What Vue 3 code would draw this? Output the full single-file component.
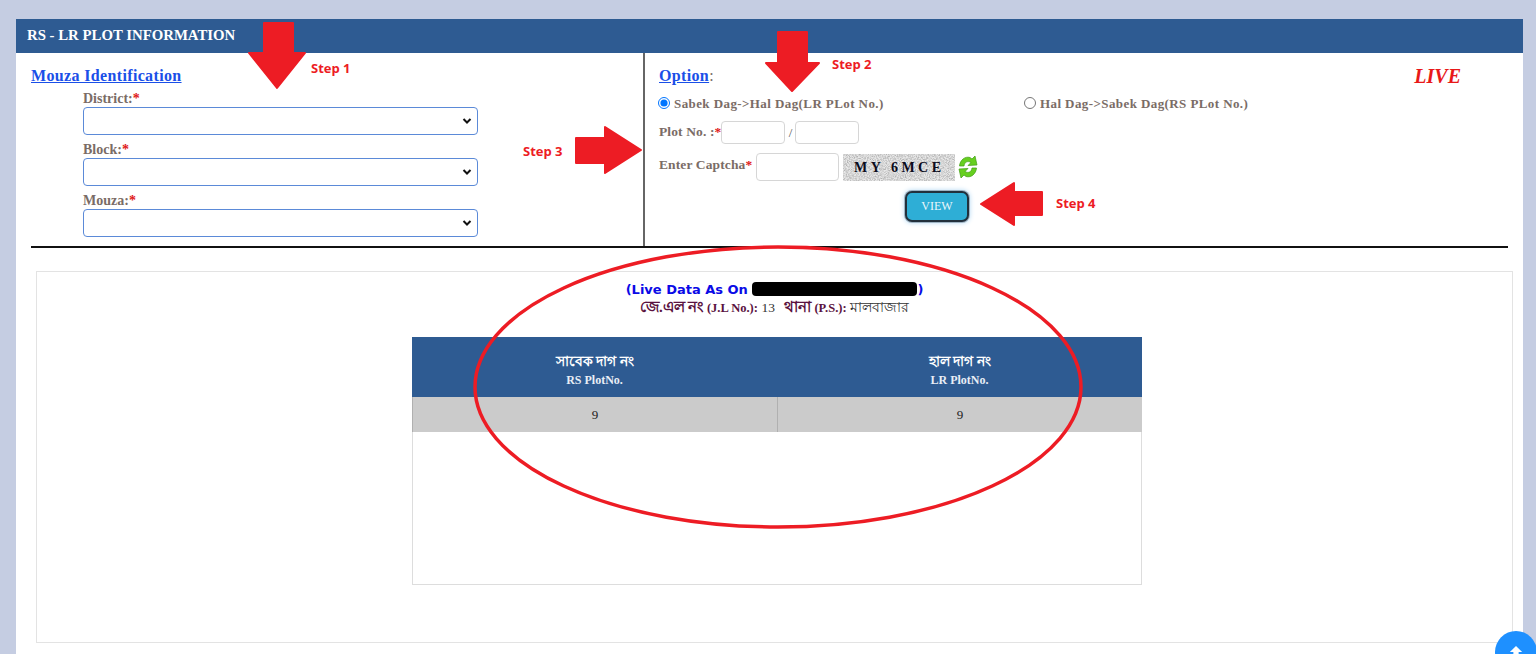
<script setup>
const fields = ['District', 'Block', 'Mouza']
const arrows = [
  '264,23 293,23 293,53 305,53 277,88 249,53 264,53',
  '778,32 807,32 807,63 819,63 792,91 766,63 778,63',
  '576,138 605,138 605,127 641,150 605,173 605,163 576,163',
  '981,204 1014,183 1014,192 1042,192 1042,215 1014,215 1014,225'
]
</script>

<template>
  <div class="page">
    <main class="panel">
      <header class="title">RS - LR PLOT INFORMATION</header>

      <section class="top">
        <div class="left">
          <h2 class="heading"><u>Mouza Identification</u></h2>
          <div class="fields">
            <label v-for="f in fields" :key="f" class="field">
              <span class="lbl">{{ f }}:<b class="req">*</b></span>
              <select class="sel"><option></option></select>
            </label>
          </div>
        </div>

        <div class="right">
          <div class="opt-head">
            <h2 class="heading"><u>Option</u><span class="colon">:</span></h2>
            <em class="live">LIVE</em>
          </div>
          <div class="radios">
            <label class="radio first"><input type="radio" name="m" checked />Sabek Dag-&gt;Hal Dag(LR PLot No.)</label>
            <label class="radio"><input type="radio" name="m" />Hal Dag-&gt;Sabek Dag(RS PLot No.)</label>
          </div>
          <div class="plot">
            <span class="lbl2 up2">Plot No. :<b class="req">*</b></span>
            <input class="inp short" />
            <span class="slash">/</span>
            <input class="inp short" />
          </div>
          <div class="captcha">
            <span class="lbl2 up4">Enter Captcha<b class="req">*</b></span>
            <input class="inp code" />
            <div class="capimg">
              <svg class="noise" width="112" height="27" aria-hidden="true">
                <filter id="grain">
                  <feTurbulence type="fractalNoise" baseFrequency="0.9" numOctaves="2" seed="4" />
                  <feColorMatrix values="0 0 0 0 0.45  0 0 0 0 0.45  0 0 0 0 0.45  1.6 1.6 0 0 -1.25" />
                </filter>
                <rect width="112" height="27" fill="#e8e8e8" />
                <rect width="112" height="27" filter="url(#grain)" />
              </svg>
              <span class="captext">MY 6MCE</span>
            </div>
            <svg class="refresh" width="22" height="24" viewBox="0 0 22 24" aria-hidden="true">
              <path d="M2.500 11 C3 5 8 1 13 2.500 L15 4 L18 1 L20 10 L11 10.500 L14 7.500 C10.500 5.500 7.500 7 7 11 Z" fill="#66cf1f" stroke="#3f9c12" stroke-width=".7" />
              <path d="M19.500 13 C19 19 14 23 9 21.500 L7 20 L4 23 L2 14 L11 13.500 L8 16.500 C11.500 18.500 14.500 17 15 13 Z" fill="#66cf1f" stroke="#3f9c12" stroke-width=".7" />
            </svg>
          </div>
          <div class="actions"><button class="view">VIEW</button></div>
        </div>
      </section>

      <section class="result">
        <p class="asof">(Live Data As On <span class="redact"></span>)</p>
        <p class="meta">
          <b>জে.এল নং</b> <span class="en">(J.L No.):</span> <span class="val">13</span>
          <b class="gap">থানা</b> <span class="en">(P.S.):</span> <span class="val">মালবাজার</span>
        </p>
        <div class="tablebox">
          <div class="thead">
            <div class="th"><strong>সাবেক দাগ নং</strong><small>RS PlotNo.</small></div>
            <div class="th"><strong>হাল দাগ নং</strong><small>LR PlotNo.</small></div>
          </div>
          <div class="trow">
            <div class="td">9</div>
            <div class="td">9</div>
          </div>
        </div>
      </section>
    </main>

    <svg class="marks" width="1536" height="654" viewBox="0 0 1536 654" aria-hidden="true">
      <polygon v-for="p in arrows" :key="p" :points="p" fill="#ed1c24" stroke="#ed1c24" stroke-width="2" stroke-linejoin="round" />
      <ellipse cx="778" cy="387" rx="303" ry="140" fill="none" stroke="#ed1c24" stroke-width="3.500" />
    </svg>
    <span class="step s1">Step 1</span>
    <span class="step s2">Step 2</span>
    <span class="step s3">Step 3</span>
    <span class="step s4">Step 4</span>
    <button class="totop" aria-label="Back to top">
      <svg width="14" height="14" viewBox="0 0 16 16"><path d="M8 1 L15 8 H11 V15 H5 V8 H1 Z" fill="#fff" /></svg>
    </button>
  </div>
</template>

<style>
html, body { margin: 0; overflow: hidden; background: #c5cde2; }
</style>

<style scoped>
.page {
  position: relative;
  width: 1536px;
  height: 654px;
  overflow: hidden;
  box-sizing: border-box;
  padding: 19px 13px 0 16px;
  background: #c5cde2;
  font-family: "Liberation Serif", "Noto Sans", serif;
}
.panel { background: #fff; height: 635px; }
.title {
  height: 34px;
  line-height: 33px;
  padding-left: 11px;
  background: #2e5b92;
  color: #fff;
  font-size: 14.800px;
  font-weight: 700;
}
.top {
  display: flex;
  height: 193px;
  margin: 0 15px;
  border-bottom: 2px solid #111;
}
.left { width: 612px; border-right: 2px solid #666; }
.heading {
  margin: 0;
  font-size: 16px;
  line-height: 20px;
  font-weight: 700;
  color: #1a4fe8;
  letter-spacing: .35px;
}
.left .heading { padding-top: 13px; }
.fields { display: flex; flex-direction: column; gap: 7px; padding: 5px 0 0 52px; }
.field { display: flex; flex-direction: column; width: 395px; }
.lbl { font-size: 14px; line-height: 16px; font-weight: 700; color: #7a6c66; }
.req { color: #e01818; }
.sel {
  appearance: none;
  height: 28px;
  width: 395px;
  background: #fff url("data:image/svg+xml,%3Csvg xmlns='http://www.w3.org/2000/svg' width='10' height='8' viewBox='0 0 10 8'%3E%3Cpath d='M1.500 2 L5 5.500 L8.500 2' fill='none' stroke='%23111' stroke-width='2'/%3E%3C/svg%3E") no-repeat right 5px center;
  border: 1px solid #5b8ad8;
  border-radius: 4px;
  box-sizing: border-box;
}
.right { flex: 1; padding: 13px 0 0 14px; }
.opt-head { display: flex; justify-content: space-between; height: 20px; padding-right: 47px; }
.colon { color: #7a6c66; font-weight: 400; }
.live { color: #e81818; font-size: 20px; font-weight: 700; line-height: 20px; }
.radios { display: flex; margin-top: 8px; height: 20px; align-items: center; }
.radio {
  display: flex;
  align-items: center;
  font-size: 13px;
  font-weight: 700;
  color: #7a6c66;
  letter-spacing: .41px;
}
.radio.first { width: 366px; }
.radio input { margin: 0 4px 2px -1px; width: 12px; height: 12px; accent-color: #0075ff; }
.plot { display: flex; align-items: center; height: 23px; margin-top: 7px; }
.lbl2 { font-size: 13.500px; font-weight: 700; color: #7a6c66; letter-spacing: .12px; }
.up2 { padding-bottom: 2px; }
.up4 { padding-bottom: 4px; }
.inp {
  box-sizing: border-box;
  background: #fff;
  border: 1px solid #d6d6d6;
  border-radius: 4px;
  height: 23px;
  padding: 0;
}
.short { width: 64px; }
.slash { width: 10px; text-align: center; font-size: 13px; color: #555; }
.captcha { display: flex; align-items: center; height: 28px; margin-top: 9px; }
.code { width: 83px; height: 28px; margin-left: 4px; }
.capimg { position: relative; width: 112px; height: 27px; margin-left: 4px; }
.noise { display: block; }
.captext {
  position: absolute;
  inset: 0;
  text-align: center;
  line-height: 27px;
  font-size: 14px;
  font-weight: 700;
  color: #0c0c1c;
  letter-spacing: 3.500px;
}
.refresh { margin-left: 2px; }
.actions { display: flex; padding-left: 246px; margin-top: 10px; }
.view {
  box-sizing: border-box;
  width: 64px;
  height: 31px;
  padding: 0;
  background: #2eaed6;
  color: #eaf6fb;
  font-family: inherit;
  font-size: 12px;
  border: 2px solid #22303c;
  border-radius: 7px;
  box-shadow: 0 0 0 1px #9fb4c4, 0 0 5px 1px #b9dcf5;
}
.result {
  margin: 23px 10px 0 20px;
  height: 372px;
  box-sizing: border-box;
  border: 1px solid #e3e3e3;
  padding-top: 9px;
}
.asof {
  margin: 0;
  text-align: center;
  font-family: "DejaVu Sans", sans-serif;
  font-size: 13px;
  line-height: 17px;
  font-weight: 700;
  color: #0a0ae6;
}
.redact {
  display: inline-block;
  width: 165px;
  height: 14px;
  background: #000;
  vertical-align: -2px;
  border-radius: 4px;
}
.meta {
  margin: 0;
  text-align: center;
  font-size: 14px;
  line-height: 19px;
  color: #5a1240;
}
.meta b { font-size: 15px; }
.en { font-size: 12.500px; font-weight: 700; }
.val { color: #333; font-size: 13.500px; }
.gap { margin-left: 9px; }
.tablebox {
  width: 730px;
  height: 248px;
  margin: 19px 0 0 375px;
  box-sizing: border-box;
  border: 1px solid #ddd;
  border-top: 0;
}
.thead { display: flex; height: 60px; background: #2e5b92; margin: 0 -1px; }
.th {
  flex: 1;
  display: flex;
  flex-direction: column;
  align-items: center;
  justify-content: center;
  gap: 2px;
  padding-top: 5px;
  box-sizing: border-box;
  color: #fff;
  font-weight: 700;
}
.th strong { font-size: 14px; line-height: 18px; }
.th small { font-size: 12px; line-height: 14px; font-weight: 700; color: #e8eef6; }
.trow { display: flex; height: 35px; background: #cbcbcb; margin: 0 -1px; }
.td {
  flex: 1;
  text-align: center;
  line-height: 35px;
  font-size: 13px;
  color: #222;
  border-left: 1px solid #b0b0b0;
}
.marks { position: absolute; left: 0; top: 0; pointer-events: none; }
.step {
  position: absolute;
  font-family: "Open Sans", sans-serif;
  font-size: 13px;
  line-height: 14px;
  font-weight: 700;
  color: #ed1c24;
}
.s1 { left: 311px; top: 61px; }
.s2 { left: 832px; top: 57px; }
.s3 { left: 523px; top: 144px; }
.s4 { left: 1056px; top: 196px; }
.totop {
  position: absolute;
  left: 1495px;
  top: 631px;
  width: 42px;
  height: 42px;
  padding: 14px 0 0;
  border: 0;
  border-radius: 50%;
  background: #1e90ff;
  display: flex;
  justify-content: center;
  align-items: flex-start;
}
</style>
